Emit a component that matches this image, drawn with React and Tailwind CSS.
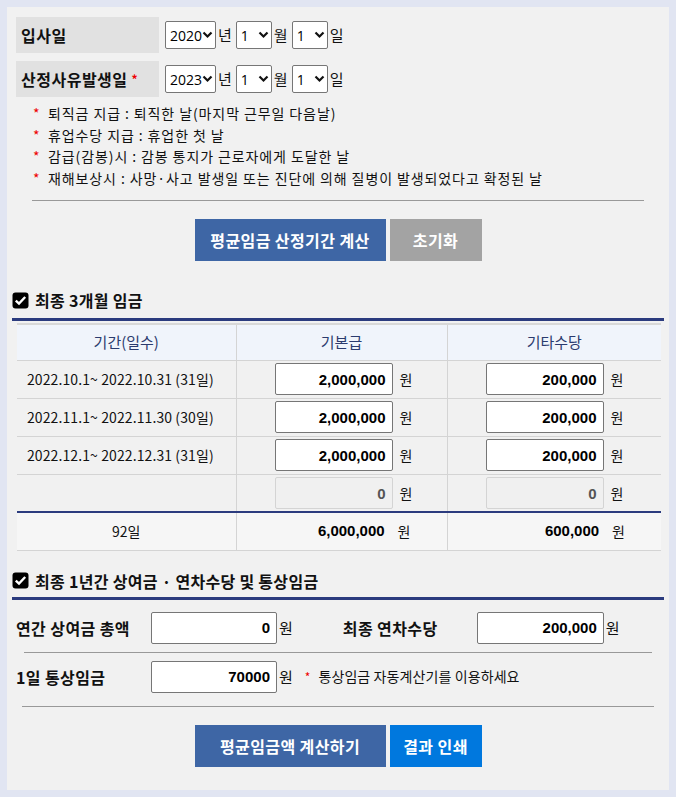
import React from 'react';

const KR = { fontFamily: '"Noto Sans CJK KR", "Noto Sans", sans-serif' };

const Chevron = () => (
    <svg width="11" height="8" viewBox="0 0 11 8" className="pointer-events-none absolute right-[3px] top-1/2 -translate-y-1/2">
        <path d="M1.5 1.5 L5.5 5.5 L9.5 1.5" fill="none" stroke="#111" strokeWidth="2.2" />
    </svg>
);

const DateSelect = ({ value, width }) => (
    <div className={`relative h-[28px] ${width}`}>
        <select
            defaultValue={value}
            className="h-full w-full appearance-none rounded-[2px] border border-[#767676] bg-white pl-[4px] text-[14px] text-black outline-none"
            style={{ fontFamily: '"Open Sans", "Noto Sans", sans-serif' }}
        >
            <option>{value}</option>
        </select>
        <Chevron />
    </div>
);

const DateRow = ({ label, required, year }) => (
    <div className="flex items-center">
        <div className="flex h-[36px] w-[143px] items-center bg-[#e1e1e1] pl-[5px] text-[16px] font-bold tracking-[0.5px] text-[#111]">
            {label}
            {required && <span className="ml-[4px] text-[12px] text-[#e00]">*</span>}
        </div>
        <div className="ml-[6px] flex items-center gap-[2px] text-[15px] text-[#111]">
            <DateSelect value={year} width="w-[51px]" />
            <span className="mr-[2px]">년</span>
            <DateSelect value="1" width="w-[36px]" />
            <span className="mr-[2px]">월</span>
            <DateSelect value="1" width="w-[36px]" />
            <span>일</span>
        </div>
    </div>
);

const NOTES = [
    '퇴직금 지급 : 퇴직한 날(마지막 근무일 다음날)',
    '휴업수당 지급 : 휴업한 첫 날',
    '감급(감봉)시 : 감봉 통지가 근로자에게 도달한 날',
    '재해보상시 : 사망·사고 발생일 또는 진단에 의해 질병이 발생되었다고 확정된 날',
];

const ROWS = [
    { period: '2022.10.1~ 2022.10.31 (31일)', base: '2,000,000', extra: '200,000' },
    { period: '2022.11.1~ 2022.11.30 (30일)', base: '2,000,000', extra: '200,000' },
    { period: '2022.12.1~ 2022.12.31 (31일)', base: '2,000,000', extra: '200,000' },
    { period: '', base: '0', extra: '0', disabled: true },
];

const NUM = { fontFamily: '"Liberation Sans", Arial, sans-serif' };

const MoneyInput = ({ value, disabled, width = 'w-[118px]' }) => (
    <input
        readOnly
        value={value}
        className={`h-[32px] ${width} shrink-0 rounded-[2px] border pr-[6px] text-right text-[15px] font-bold outline-none ${
            disabled ? 'border-[#d4d4d4] bg-[#f0f0f0] text-[#555]' : 'border-[#767676] bg-white text-black'
        }`}
        style={NUM}
    />
);

const Won = ({ className = 'ml-[7px]' }) => <span className={`text-[14px] text-[#111] ${className}`}>원</span>;

const CheckIcon = () => (
    <svg width="17" height="17" viewBox="0 0 17 17" className="shrink-0">
        <rect x="0.5" y="0.5" width="16" height="16" rx="3" fill="#000" />
        <path d="M3.8 8.6 L7 11.6 L13.2 5" fill="none" stroke="#fff" strokeWidth="2.4" />
    </svg>
);

const SectionTitle = ({ children, pad = 'pb-[6px]' }) => (
    <div className={`mx-[-4px] flex items-center gap-[6px] border-b-[3px] border-[#2b3b7e] ${pad} text-[16px] font-bold tracking-[0.3px] text-[#111]`}>
        <CheckIcon />
        {children}
    </div>
);

const Btn = ({ children, color, width }) => (
    <button className={`h-[42px] ${width} ${color} text-[16px] font-bold tracking-[0.4px] text-white`}>{children}</button>
);

const Label = ({ children, width }) => (
    <span className={`${width} shrink-0 text-[16px] font-bold tracking-[0.4px] text-[#111]`}>{children}</span>
);

export default function App() {
    return (
        <div className="w-[676px] border-[7px] border-[#e1e5f2] bg-[#f1f1f1]" style={KR}>
            <div className="px-[9px] pt-[10px] pb-[23px]">
                <div className="flex flex-col gap-[8px]">
                    <DateRow label="입사일" year="2020" />
                    <DateRow label="산정사유발생일" required year="2023" />
                </div>

                <ul className="mt-[6px] ml-[17px] text-[14px] leading-[21.6px] tracking-[0.9px] text-[#111]">
                    {NOTES.map((n) => (
                        <li key={n} className="flex">
                            <span className="w-[15px] text-[#e00]">*</span>
                            {n}
                        </li>
                    ))}
                </ul>

                <hr className="mx-[16px] mt-[11px] border-t border-[#999]" />

                <div className="mt-[18px] flex justify-center gap-[4px]">
                    <Btn color="bg-[#3e66a5]" width="w-[191px]">평균임금 산정기간 계산</Btn>
                    <Btn color="bg-[#a3a3a3]" width="w-[92px]">초기화</Btn>
                </div>

                <div className="mt-[27px]">
                    <SectionTitle>최종 3개월 임금</SectionTitle>
                </div>

                <table className="mx-[1px] mt-[2px] w-[644px] border-collapse text-[14px]">
                    <thead>
                        <tr className="h-[36px] border-t-2 border-[#d8d8d8] bg-[#f0f4fb] text-[15px] text-[#2b3b6e]">
                            <th className="w-[219px] border-r border-b border-[#d4d4d4] font-normal">기간(일수)</th>
                            <th className="w-[211px] border-r border-b border-[#d4d4d4] font-normal">기본급</th>
                            <th className="border-b border-[#d4d4d4] font-normal">기타수당</th>
                        </tr>
                    </thead>
                    <tbody>
                        {ROWS.map((r, i) => (
                            <tr key={i} className="h-[38px] border-b border-[#d4d4d4]">
                                <td className="border-r border-[#d4d4d4] pl-[10px] text-[14px] tracking-[0.1px] text-[#111]">{r.period}</td>
                                <td className="border-r border-[#d4d4d4]">
                                    <div className="flex items-center pl-[38px]">
                                        <MoneyInput value={r.base} disabled={r.disabled} />
                                        <Won />
                                    </div>
                                </td>
                                <td>
                                    <div className="flex items-center pl-[38px]">
                                        <MoneyInput value={r.extra} disabled={r.disabled} />
                                        <Won />
                                    </div>
                                </td>
                            </tr>
                        ))}
                        <tr className="h-[38px] border-t-2 border-b border-t-[#2b3b7e] border-b-[#d4d4d4] bg-[#f6f6f6]">
                            <td className="border-r border-[#d4d4d4] text-center text-[14px] text-[#111]">92일</td>
                            <td className="border-r border-[#d4d4d4]">
                                <div className="flex items-center justify-end pr-[36px]">
                                    <span className="text-[15px] font-bold" style={NUM}>6,000,000</span>
                                    <Won className="ml-[13px]" />
                                </div>
                            </td>
                            <td>
                                <div className="flex items-center justify-end pr-[36px]">
                                    <span className="text-[15px] font-bold" style={NUM}>600,000</span>
                                    <Won className="ml-[13px]" />
                                </div>
                            </td>
                        </tr>
                    </tbody>
                </table>

                <div className="mt-[18px]">
                    <SectionTitle pad="pb-[4px]">최종 1년간 상여금 · 연차수당 및 통상임금</SectionTitle>
                </div>

                <div className="mt-[12px] flex items-center">
                    <Label width="w-[135px]">연간 상여금 총액</Label>
                    <MoneyInput value="0" width="w-[126px]" />
                    <Won className="ml-[2px] text-[15px]" />
                    <span className="ml-[50px] w-[134px] shrink-0 text-[16px] font-bold tracking-[0.4px] text-[#111]">최종 연차수당</span>
                    <MoneyInput value="200,000" width="w-[127px]" />
                    <Won className="ml-[2px] text-[15px]" />
                </div>

                <hr className="mx-[8px] mt-[8px] border-t border-[#999]" />

                <div className="mt-[8px] flex items-center">
                    <Label width="w-[135px]">1일 통상임금</Label>
                    <MoneyInput value="70000" width="w-[126px]" />
                    <Won className="ml-[2px] text-[15px]" />
                    <span className="ml-[12px] text-[12px] text-[#e00]">*</span>
                    <span className="ml-[8px] text-[14px] tracking-[0.1px] text-[#111]">통상임금 자동계산기를 이용하세요</span>
                </div>

                <hr className="mx-[6px] mt-[13px] border-t border-[#999]" />

                <div className="mt-[18px] flex justify-center gap-[4px]">
                    <Btn color="bg-[#3e66a5]" width="w-[191px]">평균임금액 계산하기</Btn>
                    <Btn color="bg-[#0078de]" width="w-[92px]">결과 인쇄</Btn>
                </div>
            </div>
        </div>
    );
}
